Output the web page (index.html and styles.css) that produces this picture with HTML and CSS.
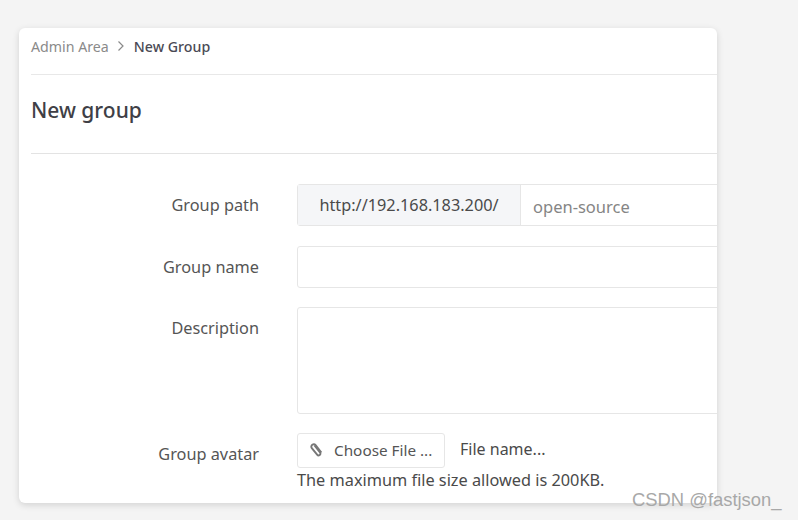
FILE: index.html
```html
<!DOCTYPE html>
<html lang="en">
<head>
    <meta charset="UTF-8">
    <meta name="viewport" content="width=device-width, initial-scale=1.0">
    <title>New group</title>
    <link rel="stylesheet" href="styles.css">
</head>
<body>
    <div class="card">
        <div class="breadcrumb">
            <span class="crumb">Admin Area</span>
            <svg class="crumb-sep" width="8" height="12" viewBox="0 0 8 12"><path d="M1.5 1.5 6 6l-4.5 4.5" fill="none" stroke="#8a8a8a" stroke-width="1.2"/></svg>
            <span class="crumb-current">New Group</span>
        </div>
        <h1 class="title">New group</h1>
        <form class="form">
            <div class="row path-row">
                <label class="label">Group path</label>
                <div class="field path-field">
                    <span class="prefix">http://192.168.183.200/</span>
                    <span class="path-value">open-source</span>
                </div>
            </div>
            <div class="row">
                <label class="label">Group name</label>
                <div class="field"></div>
            </div>
            <div class="row">
                <label class="label">Description</label>
                <div class="field area"></div>
            </div>
            <div class="row avatar-row">
                <label class="label">Group avatar</label>
                <div class="avatar">
                    <div class="file-line">
                        <span class="file-btn">
                            <svg width="15" height="15" viewBox="0 0 15 15"><path d="M4.5 3.5l5.500 7c.7.9.5 2-.3 2.600s-1.900.5-2.600-.4L1.800 6.200C1 5.100 1.200 3.600 2.300 2.800s2.500-.6 3.300.4l5.800 7.300" fill="none" stroke="#777" stroke-width="1.900"/></svg>
                            Choose File ...
                        </span>
                        <span class="file-name">File name...</span>
                    </div>
                    <p class="hint">The maximum file size allowed is 200KB.</p>
                </div>
            </div>
        </form>
    </div>
    <div class="watermark">CSDN @fastjson_</div>
</body>
</html>
```

FILE: styles.css
```css
html, body {
    height: 100%;
}
body {
    margin: 0;
    padding: 28px 0 0 19px;
    box-sizing: border-box;
    overflow: hidden;
    background-color: #f4f4f4;
    font-family: "Noto Sans", "Open Sans", sans-serif;
    font-size: 16.3px;
    color: #4a4a4a;
}
.card {
    width: 698px;
    height: 475px;
    padding-left: 12px;
    box-sizing: border-box;
    overflow: hidden;
    background-color: #fff;
    border-radius: 6px;
    box-shadow: 0 2px 7px rgba(0, 0, 0, 0.14);
}
.breadcrumb {
    display: flex;
    align-items: center;
    height: 36px;
    padding-bottom: 10px;
    border-bottom: 1px solid #e8e8e8;
    font-size: 14.2px;
}
.crumb {
    color: #8a8a8a;
}
.crumb-sep {
    margin: 0 9px 0 8px;
}
.crumb-current {
    font-weight: 500;
    color: #4a4a55;
}
.title {
    display: flex;
    align-items: center;
    height: 69px;
    padding-bottom: 9px;
    margin: 0;
    border-bottom: 1px solid #e3e3e3;
    font-size: 21px;
    font-weight: 500;
    color: #3f3f46;
}
.form {
    padding-top: 30px;
}
.row {
    display: flex;
    margin-bottom: 19px;
}
.path-row {
    margin-bottom: 20px;
}
.label {
    width: 228px;
    flex-shrink: 0;
    padding-top: 10px;
    text-align: right;
    color: #555;
}
.field {
    flex: 1;
    height: 42px;
    margin-left: 38px;
    margin-right: -8px;
    box-sizing: border-box;
    border: 1px solid #e6e6e6;
    border-radius: 3px;
    background-color: #fff;
}
.path-field {
    display: flex;
    align-items: center;
}
.prefix {
    display: flex;
    align-items: center;
    justify-content: center;
    width: 222px;
    height: 100%;
    border-right: 1px solid #e6e6e6;
    background-color: #f5f6f8;
    color: #4a4a4a;
}
.path-value {
    padding: 3px 0 0 12px;
    font-size: 16.5px;
    color: #858585;
}
.area {
    height: 107px;
}
.avatar-row {
    margin-bottom: 0;
}
.avatar {
    margin-left: 38px;
}
.file-line {
    display: flex;
    align-items: center;
}
.file-btn {
    display: flex;
    align-items: center;
    gap: 9px;
    width: 148px;
    height: 35px;
    padding: 0 0 2px 12px;
    box-sizing: border-box;
    border: 1px solid #e6e6e6;
    border-radius: 3px;
    font-size: 15.3px;
    color: #555;
}
.file-name {
    margin-left: 15px;
    margin-top: -3px;
    font-size: 16px;
}
.hint {
    margin: 1px 0 0;
    color: #4a4a4a;
}
.watermark {
    position: absolute;
    left: 632px;
    top: 489px;
    font-family: "Liberation Sans", sans-serif;
    font-size: 18.4px;
    color: #a8a8a8;
}
```
